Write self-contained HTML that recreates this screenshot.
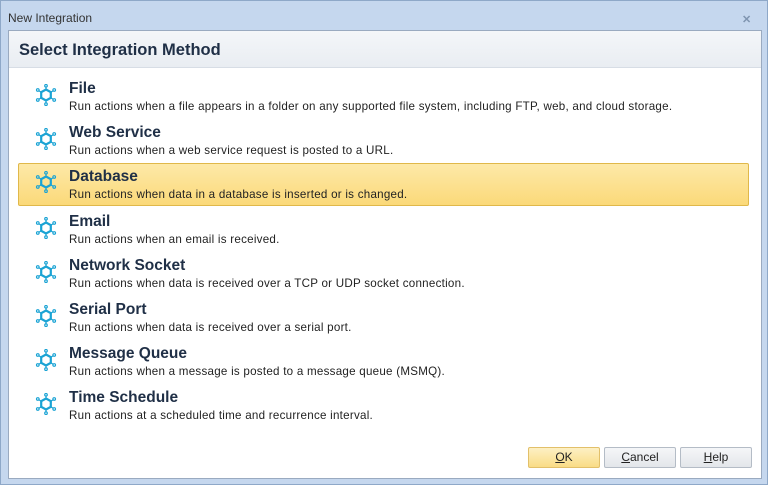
<!DOCTYPE html><html><head><style>
body{margin:0;width:768px;height:485px;overflow:hidden;font-family:"Liberation Sans",sans-serif;}
.win{position:absolute;left:0;top:0;width:766px;height:483px;background:#c5d7ee;border:1px solid #8ea8c8;}
.t{position:absolute;left:7px;top:10px;font-size:12px;color:#333;}
.x{position:absolute;left:741px;top:12px;font-size:11px;color:#7f95b0;font-weight:bold;}
.p{position:absolute;left:7px;top:29px;width:752px;height:447px;background:#fff;border:1px solid #9aaac0;}
.h{height:36px;background:linear-gradient(#f4f6f9,#e9edf2);border-bottom:1px solid #d7dde5;font-size:16.5px;font-weight:bold;color:#1f2f46;line-height:38px;padding-left:10px;}
.it{position:absolute;left:10px;width:730px;height:41px;}
.it.sel{background:linear-gradient(#fde9a8,#fbd979);border:1px solid #e0b84a;border-radius:2px;left:9px;width:729px;}
.it svg{position:absolute;left:16px;top:3px;}
.tt{position:absolute;left:50px;top:-1px;font-size:15.5px;font-weight:bold;color:#1f2f46;}
.d{position:absolute;left:50px;top:19px;font-size:11.6px;letter-spacing:0.25px;color:#222;white-space:nowrap;}
.b{position:absolute;top:416px;width:70px;height:19px;border:1px solid #b4bcc6;border-radius:2px;background:linear-gradient(#f5f6f8,#e3e6ea);font-size:12px;text-align:center;line-height:19px;color:#222;}
</style></head><body>
<div class="win"><div class="t">New Integration</div><div class="x">✕</div>
<div class="p"><div class="h">Select Integration Method</div>
<svg width="0" height="0" style="position:absolute"><defs><g id="ic" fill="none" stroke="#1aa3d4"><polygon points="11,5.5 15.8,8.2 15.8,13.8 11,16.5 6.2,13.8 6.2,8.2" stroke-width="2.2"/><g stroke-width="1.2"><line x1="11" y1="5.5" x2="11" y2="2.5"/><line x1="11" y1="16.5" x2="11" y2="19.5"/><line x1="15.8" y1="8.2" x2="18.5" y2="6.5"/><line x1="6.2" y1="8.2" x2="3.5" y2="6.5"/><line x1="15.8" y1="13.8" x2="18.5" y2="15.5"/><line x1="6.2" y1="13.8" x2="3.5" y2="15.5"/><circle cx="11" cy="1.8" r="1.3"/><circle cx="11" cy="20.2" r="1.3"/><circle cx="19.2" cy="6" r="1.3"/><circle cx="2.8" cy="6" r="1.3"/><circle cx="19.2" cy="16" r="1.3"/><circle cx="2.8" cy="16" r="1.3"/></g></g></defs></svg>
<div class="it" style="top:50px"><svg width="22" height="22"><use href="#ic"/></svg><div class="tt">File</div><div class="d">Run actions when a file appears in a folder on any supported file system, including FTP, web, and cloud storage.</div></div>
<div class="it" style="top:94px"><svg width="22" height="22"><use href="#ic"/></svg><div class="tt">Web Service</div><div class="d">Run actions when a web service request is posted to a URL.</div></div>
<div class="it sel" style="top:132px;height:41px"><svg width="22" height="22" style="top:7px;left:16px"><use href="#ic"/></svg><div class="tt" style="top:4px;left:50px">Database</div><div class="d" style="top:24px;left:50px">Run actions when data in a database is inserted or is changed.</div></div>
<div class="it" style="top:183px"><svg width="22" height="22"><use href="#ic"/></svg><div class="tt">Email</div><div class="d">Run actions when an email is received.</div></div>
<div class="it" style="top:227px"><svg width="22" height="22"><use href="#ic"/></svg><div class="tt">Network Socket</div><div class="d">Run actions when data is received over a TCP or UDP socket connection.</div></div>
<div class="it" style="top:271px"><svg width="22" height="22"><use href="#ic"/></svg><div class="tt">Serial Port</div><div class="d">Run actions when data is received over a serial port.</div></div>
<div class="it" style="top:315px"><svg width="22" height="22"><use href="#ic"/></svg><div class="tt">Message Queue</div><div class="d">Run actions when a message is posted to a message queue (MSMQ).</div></div>
<div class="it" style="top:359px"><svg width="22" height="22"><use href="#ic"/></svg><div class="tt">Time Schedule</div><div class="d">Run actions at a scheduled time and recurrence interval.</div></div>
<div class="b" style="left:519px;background:linear-gradient(#fdf0c4,#f9dc86);border-color:#e2c06a"><u>O</u>K</div>
<div class="b" style="left:595px"><u>C</u>ancel</div>
<div class="b" style="left:671px"><u>H</u>elp</div>
</div></div>
</body></html>
